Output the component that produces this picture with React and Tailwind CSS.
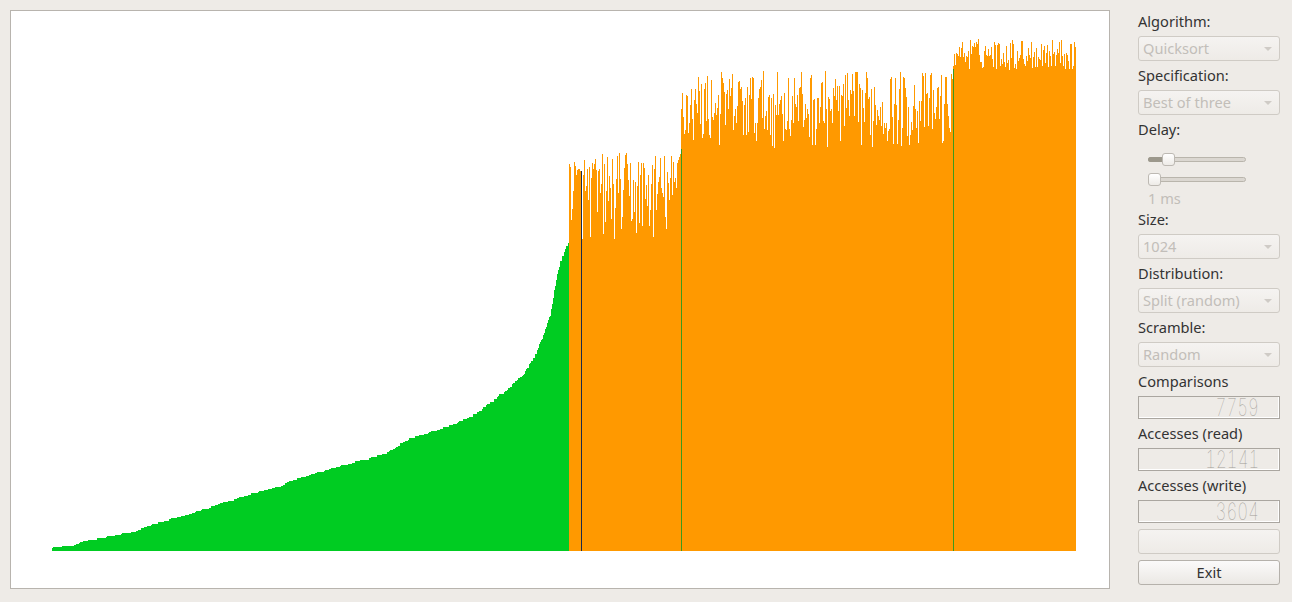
import React from "react";

function makeBars() {
  let s = 12345;
  const r = () => { s = (s * 1664525 + 1013904223) >>> 0; return s / 4294967296; };
  const pts = [[52,549],[70,546],[92,540],[130,533],[150,526],[200,511],[250,495],[280,486],[300,478],[350,464],[380,456],[410,439],[440,430],[470,418],[490,403],[510,387],[525,372],[535,355],[545,330],[550,315],[555,285],[560,262],[564,252],[568,243]];
  const bars = [];
  let prev = 550;
  for (let x = 52; x < 569; x++) {
    let i = 0;
    while (i < pts.length - 2 && pts[i + 1][0] <= x) i++;
    const [a, b] = [pts[i], pts[i + 1]];
    const y = a[1] + ((b[1] - a[1]) * (x - a[0])) / (b[0] - a[0]);
    const noisy = Math.round(y + (r() - 0.5) * 3);
    prev = Math.min(prev, noisy);
    bars.push([x, prev, "#00cc22"]);
  }
  const block = (from, to, low, high) => {
    for (let x = from; x < to; x++) {
      const y = low - Math.pow(r(), 0.85) * (low - high);
      bars.push([x, Math.round(y), "#ff9900"]);
    }
  };
  block(569, 677, 241, 152);
  bars.push([569, 165, "#ff9900"], [570, 167, "#ff9900"]);
  for (let x = 677; x < 681; x++) bars.push([x, 163 - (x - 677) * 3, "#ff9900"]);
  block(681, 953, 148, 71);
  block(953, 1076, 70, 39);
  bars.push([581, 171, "#1d2b4a"], [681, 149, "#3d9a1c"], [953, 69, "#3d9a1c"]);
  return bars;
}

const bars = makeBars();

function Label({ children }) {
  return <div className="h-[18px] mb-[6px] leading-[18px] text-[14.6px] text-[#333333]">{children}</div>;
}

function Combo({ value }) {
  return (
    <div className="h-[25px] mb-[5px] rounded-[3px] border border-[#cfcbc5] bg-gradient-to-b from-[#f5f3f1] to-[#eeebe7] flex items-center justify-between pl-[4px] pr-[7px]">
      <span className="text-[14.6px] text-[#c2beb9]">{value}</span>
      <span className="w-0 h-0 border-x-[4px] border-x-transparent border-t-[4px] border-t-[#cfcbc6]" />
    </div>
  );
}

function Slider({ left, fill }) {
  return (
    <div className="relative h-5 w-[98px] ml-[10px]">
      <div className="absolute left-0 right-0 top-[7.5px] h-[5px] rounded-full border border-[#b9b5ac] bg-[#dbd7d1]" />
      {fill ? <div className="absolute left-0 top-[7.5px] h-[5px] rounded-l-full bg-[#9c988c]" style={{ width: left + 4 }} /> : null}
      <div
        className="absolute top-[4px] w-[13px] h-[13px] rounded-[3px] border border-[#bdb9b3] bg-gradient-to-b from-[#ffffff] to-[#eeebe7]"
        style={{ left }}
      />
    </div>
  );
}

function Lcd({ value }) {
  return (
    <div className="h-[23px] mb-[5px] border border-[#aaa6a0] shadow-[inset_-1px_-1px_0_#ffffff] flex items-center justify-end pr-[20px]">
      <span className="font-['Inter'] font-thin tabular-nums text-[24px] leading-[21px] text-[#9f9b96] scale-x-[0.7] origin-right">{value}</span>
    </div>
  );
}

export default function App() {
  return (
    <div className="w-[1292px] h-[602px] bg-[#eeebe7] flex font-['Noto_Sans',sans-serif] overflow-hidden">
      <div className="ml-[10px] mt-[10px] w-[1100px] h-[579px] bg-white border border-[#b8b4ae]">
        <svg width="1098" height="577" viewBox="11 11 1098 577" shapeRendering="crispEdges" className="block">
          {bars.map(([x, y, c], i) => (
            <rect key={i} x={x} y={y} width="1" height={551 - y} fill={c} />
          ))}
        </svg>
      </div>
      <div className="ml-[28px] w-[142px] pt-[12px] flex flex-col">
        <Label>Algorithm:</Label>
        <Combo value="Quicksort" />
        <Label>Specification:</Label>
        <Combo value="Best of three" />
        <div className="h-[18px] mb-[11px] leading-[18px] text-[14.6px] text-[#333333]">Delay:</div>
        <Slider left={14} fill />
        <Slider left={0} />
        <div className="h-[18px] mb-[3px] leading-[18px] pl-[10px] text-[14.6px] text-[#c2beb9]">1 ms</div>
        <Label>Size:</Label>
        <Combo value="1024" />
        <Label>Distribution:</Label>
        <Combo value="Split (random)" />
        <Label>Scramble:</Label>
        <Combo value="Random" />
        <Label>Comparisons</Label>
        <Lcd value="7759" />
        <Label>Accesses (read)</Label>
        <Lcd value="12141" />
        <Label>Accesses (write)</Label>
        <Lcd value="3604" />
        <div className="h-[25px] mt-[1px] mb-[6px] rounded-[3px] border border-[#cfcbc5] bg-gradient-to-b from-[#f5f3f1] to-[#eeebe7]" />
        <div className="h-[25px] rounded-[3px] border border-[#b5b1ab] bg-gradient-to-b from-[#fbfafa] to-[#ebe8e4] flex items-center justify-center text-[14.6px] text-[#333333]">Exit</div>
      </div>
    </div>
  );
}
